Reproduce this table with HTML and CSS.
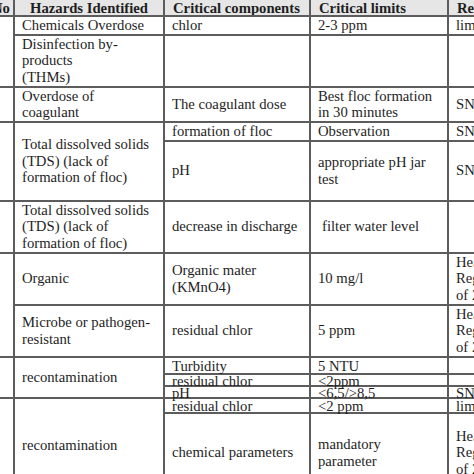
FILE: index.html
```html
<!DOCTYPE html>
<html>
<head>
<meta charset="utf-8">
<link rel="stylesheet" href="styles.css">
</head>
<body>
<table class="haccp">
  <colgroup>
    <col class="c0"><col class="c1"><col class="c2"><col class="c3"><col class="c4">
  </colgroup>
  <thead>
    <tr class="h-head">
      <th class="step"><span class="cut">No</span></th>
      <th class="hz">Hazards Identified</th>
      <th>Critical components</th>
      <th>Critical limits</th>
      <th>Regulation</th>
    </tr>
  </thead>
  <tbody>
    <tr class="h17">
      <td rowspan="2"></td>
      <td>Chemicals Overdose</td>
      <td>chlor</td>
      <td>2-3 ppm</td>
      <td>limits</td>
    </tr>
    <tr class="h52">
      <td>Disinfection by-<br>products<br>(THMs)</td>
      <td></td>
      <td></td>
      <td></td>
    </tr>
    <tr class="h34">
      <td></td>
      <td>Overdose of<br>coagulant</td>
      <td>The coagulant dose</td>
      <td>Best floc formation<br>in 30 minutes</td>
      <td>SNI</td>
    </tr>
    <tr class="h19">
      <td rowspan="2"></td>
      <td rowspan="2">Total dissolved solids<br>(TDS) (lack of<br>formation of floc)</td>
      <td>formation of floc</td>
      <td>Observation</td>
      <td>SNI</td>
    </tr>
    <tr class="h60">
      <td>pH</td>
      <td>appropriate pH jar<br>test</td>
      <td>SNI</td>
    </tr>
    <tr class="h52">
      <td></td>
      <td>Total dissolved solids<br>(TDS) (lack of<br>formation of floc)</td>
      <td>decrease in discharge</td>
      <td class="ind">filter water level</td>
      <td></td>
    </tr>
    <tr class="h52">
      <td rowspan="2"></td>
      <td>Organic</td>
      <td>Organic mater<br>(KMnO4)</td>
      <td>10 mg/l</td>
      <td>Health Minister<br>Regulation 492<br>of 2010</td>
    </tr>
    <tr class="h52">
      <td>Microbe or pathogen-<br>resistant</td>
      <td>residual chlor</td>
      <td>5 ppm</td>
      <td>Health Minister<br>Regulation 492<br>of 2010</td>
    </tr>
    <tr class="h17 tight">
      <td rowspan="3"></td>
      <td rowspan="3">recontamination</td>
      <td>Turbidity</td>
      <td>5 NTU</td>
      <td></td>
    </tr>
    <tr class="h12 tight">
      <td>residual chlor</td>
      <td>&lt;2ppm</td>
      <td></td>
    </tr>
    <tr class="h12 tight">
      <td>pH</td>
      <td>&lt;6,5/&gt;8,5</td>
      <td>SNI</td>
    </tr>
    <tr class="h15 tight">
      <td rowspan="2"></td>
      <td rowspan="2">recontamination</td>
      <td>residual chlor</td>
      <td>&lt;2 ppm</td>
      <td>limits</td>
    </tr>
    <tr class="h80">
      <td>chemical parameters</td>
      <td>mandatory<br>parameter</td>
      <td>Health Minister<br>Regulation 492<br>of 2010</td>
    </tr>
  </tbody>
</table>
</body>
</html>
```

FILE: styles.css
```css
html, body {
  margin: 0;
  padding: 0;
  background: #ffffff;
  overflow: hidden;
}

.haccp {
  border-collapse: collapse;
  table-layout: fixed;
  width: 562px;
  margin-left: -2px;
  margin-top: -2px;
  font-family: "Liberation Serif", "Times New Roman", serif;
  font-size: 14.7px;
  line-height: 16.5px;
  color: #1e1e1e;
}

.c0 { width: 15px; }
.c1 { width: 150px; }
.c2 { width: 146px; }
.c3 { width: 138px; }
.c4 { width: 113px; }

.haccp th,
.haccp td {
  border: 2px solid #5c5c5c;
  padding: 0 0 0 7px;
  vertical-align: middle;
  text-align: left;
  white-space: nowrap;
  overflow: hidden;
}

.haccp th {
  background: #e6e6e6;
  font-weight: bold;
  padding-left: 8px;
  padding-top: 1px;
  line-height: 14px;
}

.haccp th.hz {
  text-align: center;
  padding-left: 0;
}

.haccp th.step {
  padding-left: 0;
}

.cut {
  display: inline-block;
  margin-left: -8px;
}

.h-head { height: 17px; }
.h12 { height: 12px; }
.h15 { height: 15px; }
.h17 { height: 17px; }
.h19 { height: 19px; }
.h34 { height: 34px; }
.h52 { height: 52px; }
.h60 { height: 60px; }
.h80 { height: 80px; }

.haccp .tight td {
  line-height: 8px;
  padding-top: 2px;
  overflow: visible;
}

.haccp .tight td[rowspan] {
  line-height: 16.5px;
  padding-top: 0;
}

.haccp td.ind {
  padding-left: 11px;
}
```
